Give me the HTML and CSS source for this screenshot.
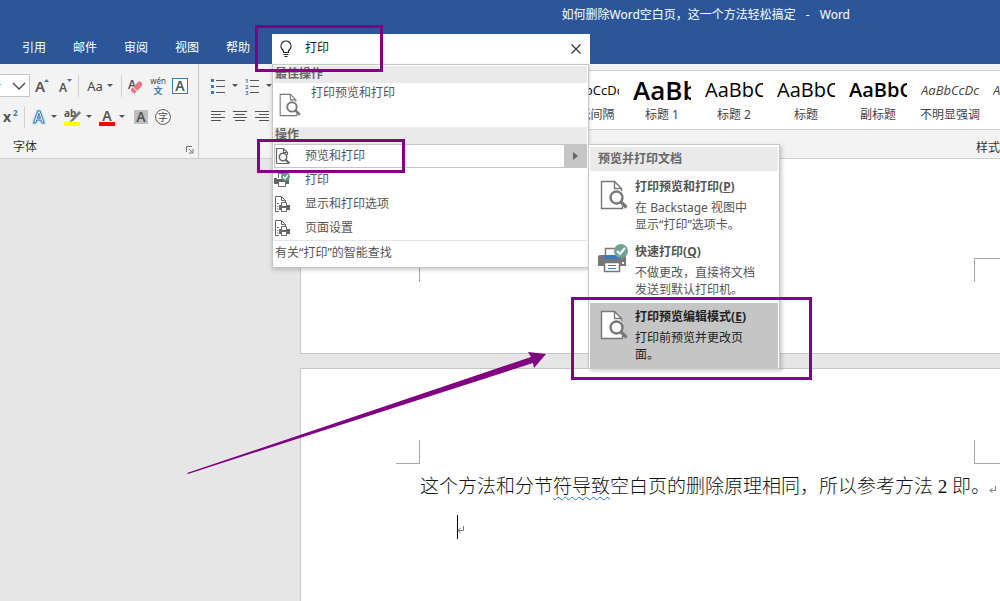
FILE: index.html
```html
<!DOCTYPE html>
<html lang="zh-CN">
<head>
<meta charset="utf-8">
<title>如何删除Word空白页，这一个方法轻松搞定 - Word</title>
<link rel="stylesheet" href="styles.css">
</head>
<body>
<svg class="defs" aria-hidden="true">
  <symbol id="i-preview" viewBox="0 0 28 30">
    <path d="M1.500 1.500H14.500L21.500 8.500V12L22.500 26V28.500H1.500Z" fill="#fff"/>
    <path d="M21.500 11V8.500L14.500 1.500H1.500V28.500H22.500V26M14.500 1.500V8.500H21.500" fill="none" stroke="#777" stroke-width="1.400"/>
    <circle cx="16.500" cy="17.500" r="6" fill="#fff" stroke="#777" stroke-width="2.400"/>
    <path d="M20.500 21.500L26.500 27.500" stroke="#777" stroke-width="3.400"/>
  </symbol>
  <symbol id="i-preview-sm" viewBox="0 0 16 18">
    <path d="M1.500 16.500V1.500H8.500L12.500 5.500V8M8.500 1.500V5.500H12.500M1.500 16.500H13" fill="none" stroke="#666" stroke-width="1.200"/>
    <circle cx="8" cy="10" r="3.700" fill="#fff" stroke="#666" stroke-width="1.500"/>
    <path d="M10.500 12.500L14.500 16.500" stroke="#666" stroke-width="2.200"/>
  </symbol>
  <symbol id="i-quick" viewBox="0 0 32 30">
    <path d="M8.500 12V4.500H21V12" fill="#fff" stroke="#777" stroke-width="1.500"/>
    <path d="M1 13Q1 11 3 11H27Q29 11 29 13V22H1Z" fill="#777"/>
    <path d="M7 11H23V15H7Z" fill="#3f7ab8"/>
    <path d="M25 18H27V20H25Z" fill="#fff"/>
    <path d="M7.500 18.500H22.500V27.500H7.500Z" fill="#fff" stroke="#777" stroke-width="1.500"/>
    <path d="M11 21.500H19M11 24.500H19" stroke="#3f7ab8"/>
    <circle cx="24" cy="7" r="7" fill="#6fa392"/>
    <path d="M20 7L23 10L28 4" fill="none" stroke="#fff" stroke-width="2"/>
  </symbol>
  <symbol id="i-print" viewBox="0 0 16 16">
    <path d="M4.500 6V1.500H11V6" fill="#fff" stroke="#666"/>
    <path d="M0 6H3V7H12V6H15V12H0Z" fill="#666"/>
    <path d="M4.500 9.500H11.500V14.500H4.500Z" fill="#fff" stroke="#666"/>
    <circle cx="11.500" cy="4.500" r="4.500" fill="#5f9c88"/>
    <path d="M9 4.500L11 6.500L14 3" fill="none" stroke="#fff" stroke-width="1.300"/>
  </symbol>
  <symbol id="i-setup" viewBox="0 0 16 16">
    <path d="M5 15.500H1.500V.5H7.500L11.500 4.500V6M7.500.5V4.500H11.500" fill="none" stroke="#666"/>
    <path d="M3 7.500H5M3 10.500H4M3 13H4" stroke="#666"/>
    <path d="M7.500 10V6.500H12.500V10" fill="#fff" stroke="#666"/>
    <path d="M5 9H7V10H13V9H16V14H5Z" fill="#666"/>
    <path d="M7.500 11.500H12.500V15.500H7.500Z" fill="#fff" stroke="#666"/>
  </symbol>
  <symbol id="i-return" viewBox="0 0 8 8">
    <path d="M6.500 0V4.500H1M3.500 2L1 4.500L3.500 7" fill="none" stroke="#777"/>
  </symbol>
</svg>

<header class="titlebar">
  <div class="title"><span>如何删除Word空白页，这一个方法轻松搞定</span><span>-</span><span>Word</span></div>
  <div class="tabs">
    <nav class="tab-list">
      <a href="#">引用</a><a href="#">邮件</a><a href="#">审阅</a><a href="#">视图</a><a href="#">帮助</a>
    </nav>
    <div class="search">
      <svg class="bulb" viewBox="0 0 14 18"><path d="M4.500 12.500V11.500Q4.500 10.500 3 9A5 5 0 1 1 11 9Q9.500 10.500 9.500 11.500V12.500ZM4.500 14.500H9.500M5.500 16.500H8.500" fill="none" stroke="#222" stroke-width="1.200"/></svg>
      <input type="text" value="打印" aria-label="操作说明搜索">
      <button class="clear" aria-label="清除"><svg viewBox="0 0 10 10"><path d="M.5.5L9.500 9.500M9.500.5L.5 9.500" stroke="#333" stroke-width="1.200"/></svg></button>

      <div class="menu">
        <h2 class="menu-head">最佳操作</h2>
        <button class="best"><svg><use href="#i-preview"/></svg><span>打印预览和打印</span></button>
        <h2 class="menu-head">操作</h2>
        <div class="has-sub">
          <button class="item active"><svg class="tall"><use href="#i-preview-sm"/></svg><span>预览和打印</span><i class="more"></i></button>
          <div class="submenu">
            <h2>预览并打印文档</h2>
            <button class="choice"><svg><use href="#i-preview"/></svg><span><b>打印预览和打印(<u>P</u>)</b><span>在 Backstage 视图中<br>显示“打印”选项卡。</span></span></button>
            <button class="choice"><svg class="wide"><use href="#i-quick"/></svg><span><b>快速打印(<u>Q</u>)</b><span>不做更改，直接将文档<br>发送到默认打印机。</span></span></button>
            <button class="choice selected"><svg><use href="#i-preview"/></svg><span><b>打印预览编辑模式(<u>E</u>)</b><span>打印前预览并更改页<br>面。</span></span></button>
          </div>
        </div>
        <button class="item"><svg><use href="#i-print"/></svg><span>打印</span></button>
        <button class="item"><svg><use href="#i-setup"/></svg><span>显示和打印选项</span></button>
        <button class="item"><svg><use href="#i-setup"/></svg><span>页面设置</span></button>
        <button class="lookup">有关“打印”的智能查找</button>
      </div>
    </div>
  </div>
</header>

<section class="ribbon">
  <div class="group">
    <div class="tools">
      <span class="size"><select aria-label="字号"><option>四号</option></select><svg viewBox="0 0 14 8"><path d="M1 1L7 7L13 1" fill="none" stroke="#444" stroke-width="1.300"/></svg></span>
      <button class="w24" aria-label="增大字号"><svg width="14" height="18"><text x="0" y="15" font-size="15" class="ink">A</text><path d="M9 5L11.500 2L14 5Z" fill="#3f7ab8"/></svg></button>
      <button class="w22" aria-label="减小字号"><svg width="14" height="18"><text x="1" y="15" font-size="12" class="ink">A</text><path d="M9 2H14L11.500 5Z" fill="#3f7ab8"/></svg></button>
      <i class="rule"></i>
      <button class="w38 drop" aria-label="更改大小写"><span class="aa">Aa</span></button>
      <i class="rule"></i>
      <button class="w24" aria-label="清除格式"><svg width="16" height="18"><text x="0" y="12" font-size="12" class="ink">A</text><path d="M3 12L10 5Q12 3 14 6Q15 8 13 10L7 16Q5 17 3 14Z" fill="#e8798b"/><path d="M5 10L9 14" stroke="#f3f3f3"/></svg></button>
      <button class="w20" aria-label="拼音指南"><svg width="18" height="18"><text x="9" y="7" text-anchor="middle" font-size="8" class="pinyin">wén</text><text x="9" y="17" text-anchor="middle" font-size="9" class="wen">文</text></svg></button>
      <button class="w24" aria-label="字符边框"><svg width="16" height="16"><rect x=".5" y=".5" width="15" height="15" fill="#fff" stroke="#3f7ab8"/><text x="8" y="13" text-anchor="middle" font-size="14" class="ink">A</text></svg></button>
    </div>
    <div class="tools">
      <button class="w22 sup" aria-label="上标"><svg width="16" height="16"><text x="0" y="13" font-size="14" class="ink bold">x</text><text x="10" y="7" font-size="8" class="blue">2</text></svg></button>
      <i class="rule"></i>
      <button class="w34 drop" aria-label="文本效果"><svg width="16" height="18"><text x="8" y="15" text-anchor="middle" font-size="16" class="glow">A</text></svg></button>
      <button class="w34 drop" aria-label="突出显示"><svg width="18" height="18"><text x="0" y="9" font-size="10" class="ink bold">ab</text><path d="M7 12L15 3L17 5L9 13L5 14Z" fill="#777"/><path d="M0 14H16V18H0Z" fill="#ff0"/></svg></button>
      <button class="w34 drop" aria-label="字体颜色"><svg width="16" height="18"><text x="8" y="13" text-anchor="middle" font-size="14" class="ink">A</text><path d="M0 14H16V18H0Z" fill="red"/></svg></button>
      <button class="w24" aria-label="字符底纹"><svg width="14" height="14"><path d="M0 0H14V14H0Z" fill="#bfbfbf"/><text x="7" y="12" text-anchor="middle" font-size="14" class="ink">A</text></svg></button>
      <button class="w20" aria-label="带圈字符"><svg width="16" height="16"><circle cx="8" cy="8" r="7.400" fill="#fff" stroke="#555"/><text x="8" y="12" text-anchor="middle" font-size="10" class="ring">字</text></svg></button>
    </div>
    <div class="caption"><span>字体</span><button aria-label="字体对话框"><svg width="8" height="8"><path d="M.5 6V.5H6M3 3L6 6M7 3V7H3" fill="none" stroke="#777"/></svg></button></div>
  </div>

  <div class="group paragraph">
    <div class="tools">
      <button class="w34 drop" aria-label="项目符号"><svg width="14" height="16"><path d="M5 2.500H14M5 8.500H14M5 14.500H14" stroke="#555"/><path d="M0 1H3V4H0ZM0 7H3V10H0ZM0 13H3V16H0Z" fill="#3f7ab8"/></svg></button>
      <button class="w34 drop" aria-label="编号"><svg width="14" height="16"><path d="M5 2.500H14M5 8.500H14M5 14.500H14" stroke="#555"/><text x="0" y="5" font-size="6" class="num">1</text><text x="0" y="11" font-size="6" class="num">2</text><text x="0" y="17" font-size="6" class="num">3</text></svg></button>
    </div>
    <div class="tools">
      <button class="w22" aria-label="左对齐"><svg width="14" height="11"><path d="M0 .5H14M0 3.500H10M0 6.500H14M0 9.500H10" stroke="#555"/></svg></button>
      <button class="w22" aria-label="居中"><svg width="14" height="11"><path d="M0 .5H14M2 3.500H12M0 6.500H14M2 9.500H12" stroke="#555"/></svg></button>
      <button class="w22" aria-label="右对齐"><svg width="14" height="11"><path d="M0 .5H14M4 3.500H14M0 6.500H14M4 9.500H14" stroke="#555"/></svg></button>
    </div>
  </div>

  <div class="styles">
    <div class="gallery">
      <button><span class="sample small">AaBbCcDc</span><span>↵ 无间隔</span></button>
      <button><span class="sample large">AaBb</span><span>标题 1</span></button>
      <button><span class="sample">AaBbC</span><span>标题 2</span></button>
      <button><span class="sample">AaBbC</span><span>标题</span></button>
      <button><span class="sample heavy">AaBbC</span><span>副标题</span></button>
      <button><span class="sample small slant">AaBbCcDc</span><span>不明显强调</span></button>
      <button><span class="sample small slant">AaBbCcDc</span></button>
    </div>
    <div class="styles-caption">样式</div>
  </div>
</section>

<main class="document">
  <section class="page first">
    <div class="marks bottom"><i></i><i></i></div>
  </section>
  <section class="page second">
    <div class="marks top"><i></i><i></i></div>
    <p>这个方法和分节<span class="checked">符导致</span>空白页的删除原理相同，所以参考方法 2 即。<svg><use href="#i-return"/></svg></p>
    <p class="indent"><i class="caret"></i><svg><use href="#i-return"/></svg></p>
  </section>
</main>

<svg class="annotations" width="1000" height="601" aria-hidden="true">
  <g fill="none" stroke="#800080" stroke-width="3">
    <rect x="256.500" y="26.500" width="125" height="44"/>
    <rect x="258.500" y="140.500" width="145" height="31"/>
    <rect x="572.500" y="298.500" width="238" height="80"/>
  </g>
  <path d="M187 473L531 357L528 352L546 354L534 368L533 363L188 474Z" fill="#800080"/>
</svg>
</body>
</html>
```
FILE: styles.css
```css
* { box-sizing: border-box; }

body {
  margin: 0;
  min-height: 100vh;
  display: flex;
  flex-direction: column;
  position: relative;
  overflow: hidden;
  background: #e6e6e6;
  color: #444;
  font: 12px/16px "Noto Sans", "Noto Sans CJK SC", sans-serif;
}

button, input, select {
  margin: 0;
  padding: 0;
  border: 0;
  background: none;
  color: inherit;
  font: inherit;
}

h2, p { margin: 0; font: inherit; }
svg { display: block; flex: none; overflow: visible; }
.defs { position: absolute; width: 0; height: 0; }

/* Title bar and tabs */
.titlebar { background: #2b579a; color: #fff; }
.title {
  height: 30px;
  padding-right: 150px;
  display: flex;
  align-items: center;
  justify-content: flex-end;
  gap: 10px;
}
.tabs { display: flex; height: 34px; padding-left: 22px; gap: 22px; }
.tab-list { display: flex; align-items: center; gap: 27px; padding-top: 2px; }
.tab-list a { color: inherit; text-decoration: none; }

.search {
  position: relative;
  width: 318px;
  height: 30px;
  margin-top: 4px;
  display: flex;
  align-items: center;
  padding: 0 9px 0 7px;
  background: #fff;
  color: #444;
}
.bulb { width: 14px; height: 18px; }
.search input { flex: 1; min-width: 0; margin-left: 12px; color: #222; outline: none; padding-bottom: 3px; }
.clear svg { width: 10px; height: 10px; }

/* Search results */
.menu {
  position: absolute;
  z-index: 2;
  top: 30px;
  left: 0;
  width: 317px;
  padding: 1px 1px 2px;
  background: #fff;
  border: 1px solid #c6c6c6;
  box-shadow: 0 2px 4px #0003;
  color: #555;
}
.menu-head { height: 17px; padding-left: 1px; background: #eaeaea; font-weight: 700; color: #666; }
.menu button { display: flex; width: 100%; text-align: left; }
.best { height: 44px; padding: 2px 5px; gap: 10px; }
.best svg { width: 22px; height: 24px; margin-top: 8px; }
.item { height: 24px; align-items: center; gap: 15px; }
.item svg { width: 16px; height: 16px; }
.item .tall { height: 18px; margin-right: -1px; }
.item.active { border: 1px solid #c6c6c6; }
.more { align-self: stretch; width: 22px; margin-left: auto; display: grid; place-items: center; background: #c5c5c5; }
.more::after { content: ""; border: 4px solid transparent; border-left: 5px solid #666; border-right: 0; }
.has-sub { position: relative; }
.menu .lookup { height: 25px; align-items: center; padding-left: 1px; border-top: 1px solid #e1e4e8; }

.submenu {
  position: absolute;
  top: 0;
  left: 314px;
  width: 192px;
  padding: 2px 1px 0;
  background: #fff;
  border: 1px solid #c6c6c6;
  box-shadow: 2px 2px 4px #0003;
}
.submenu h2 { height: 24px; margin-bottom: 2px; padding-left: 8px; line-height: 23px; background: #eaeaea; font-weight: 700; color: #666; }
.choice { min-height: 65px; padding: 5px 0 5px 7px; line-height: 17px; white-space: nowrap; }
.choice svg { width: 28px; height: 30px; margin: 2px 7px 0 3px; }
.choice .wide { width: 32px; margin: 1px 6px 0 0; }
.choice span, .choice b { display: block; }
.choice b { margin-bottom: 4px; }
.choice.selected { background: #c5c5c5; color: #222; }

/* Ribbon */
.ribbon {
  display: grid;
  grid-template-columns: 199px 355px minmax(0, 1fr);
  height: 95px;
  background: #f3f3f3;
  border-bottom: 1px solid #d0d0d0;
}
.group { padding-top: 6px; border-right: 1px solid #c8c8c8; }
.tools { display: flex; align-items: center; height: 31px; }
.tools button { flex: none; display: flex; align-items: center; justify-content: center; height: 24px; }
.w20 { width: 20px; }
.w22 { width: 22px; }
.w24 { width: 24px; }
.w34 { width: 34px; }
.w38 { width: 38px; }
.rule { width: 1px; height: 22px; margin: 0 2px; background: #d0d0d0; }
.drop { gap: 4px; }
.drop::after { content: ""; border: 3px solid transparent; border-top-color: #555; border-bottom: 0; }
.aa { font-size: 13px; }
.size { flex: none; display: flex; align-items: center; width: 62px; height: 23px; margin-left: -32px; background: #fff; border: 1px solid #c6c6c6; }
.size select { width: 43px; padding-left: 9px; appearance: none; color: #55aade; }
.size svg { width: 14px; height: 8px; }
.caption { display: flex; justify-content: space-between; padding: 7px 4px 0 13px; color: #333; }
.caption button { padding-top: 6px; }
.paragraph { border-right: 0; padding-left: 8px; }
.paragraph .drop { gap: 7px; }

text { fill: #555; font-family: "Noto Sans", "Noto Sans CJK SC", sans-serif; }
.ink { font-weight: 600; }
.bold { font-weight: 700; }
.pinyin, .ring { fill: #444; }
.blue, .num, .wen { fill: #3f7ab8; font-weight: 700; }
.glow { fill: #fff; stroke: #3f7ab8; stroke-width: 1px; font-weight: 600; filter: drop-shadow(0 0 1px #7fb0e0); }

.styles { padding-top: 6px; overflow: hidden; }
.gallery { display: flex; height: 60px; background: #fff; border: solid #d0d0d0; border-width: 1px 0; }
.gallery button { flex: none; width: 72px; padding: 0 7px; white-space: nowrap; display: flex; flex-direction: column; align-items: center; }
.sample { width: 58px; height: 36px; line-height: 38px; overflow: hidden; text-align: left; color: #000; font-family: "Open Sans", sans-serif; font-size: 20px; }
.sample.large { font-size: 26px; font-weight: 600; }
.sample.heavy { font-weight: 600; }
.sample.small { font-size: 13px; }
.sample.slant { font-style: italic; color: #444; }
.styles-caption { padding: 10px 0 0; text-align: right; color: #333; }

/* Document */
.document { flex: 1; display: flex; flex-direction: column; gap: 14px; padding-left: 300px; }
.page { background: #fff; border: 1px solid #c6c6c6; border-right: 0; }
.first { height: 195px; border-top: 0; padding-top: 99px; }
.second { flex: 1; border-bottom: 0; padding-top: 71px; }
.marks { display: flex; justify-content: space-between; padding-left: 95px; }
.marks i { width: 24px; height: 24px; border: 0 solid #a6a6a6; }
.marks i:first-child { border-right-width: 1px; }
.marks i:last-child { width: 26px; border-left-width: 1px; }
.bottom i { border-top-width: 1px; }
.top { margin-bottom: 2px; }
.top i { border-bottom-width: 1px; }
.page p {
  display: flex;
  align-items: center;
  padding-left: 119px;
  color: #111;
  font: 300 19px/41px "Liberation Serif", "Noto Sans CJK SC", serif;
  white-space: pre;
}
.page p svg { width: 8px; height: 8px; margin-top: 6px; margin-left: -1px; }
.checked { text-decoration: underline wavy #2f6fe4 1px; text-underline-offset: 3px; }
.page .indent { height: 40px; padding-left: 156px; }
.caret { width: 1px; height: 24px; background: #000; }

.annotations { position: absolute; top: 0; left: 0; z-index: 3; pointer-events: none; }
```
